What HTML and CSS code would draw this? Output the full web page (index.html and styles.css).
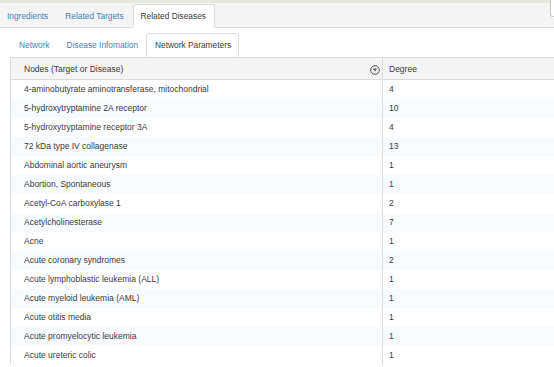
FILE: index.html
```html
<!DOCTYPE html>
<html lang="en">
<head>
  <meta charset="UTF-8">
  <title>Related Diseases - Network Parameters</title>
  <link rel="stylesheet" href="styles.css">
</head>
<body>
  <div class="top-strip"></div>
  <div class="corner-box"></div>

  <ul class="tabs main-tabs">
    <li><a href="#">Ingredients</a></li>
    <li><a href="#">Related Targets</a></li>
    <li class="active"><a href="#">Related Diseases</a></li>
  </ul>

  <div class="panel">
    <ul class="tabs sub-tabs">
      <li><a href="#">Network</a></li>
      <li><a href="#">Disease Infomation</a></li>
      <li class="active"><a href="#">Network Parameters</a></li>
    </ul>

    <table class="grid">
      <thead>
        <tr>
          <th class="col-node">
            <span>Nodes (Target or Disease)</span>
            <svg class="filter-icon" width="10" height="10" viewBox="0 0 10 10">
              <circle cx="5" cy="5" r="4.3" fill="none" stroke="#555" stroke-width="1"/>
              <path d="M2.8 3.6 H7.2 L5 6.6 Z" fill="#555"/>
            </svg>
          </th>
          <th>Degree</th>
        </tr>
      </thead>
      <tbody>
        <tr><td>4-aminobutyrate aminotransferase, mitochondrial</td><td>4</td></tr>
        <tr><td>5-hydroxytryptamine 2A receptor</td><td>10</td></tr>
        <tr><td>5-hydroxytryptamine receptor 3A</td><td>4</td></tr>
        <tr><td>72 kDa type IV collagenase</td><td>13</td></tr>
        <tr><td>Abdominal aortic aneurysm</td><td>1</td></tr>
        <tr><td>Abortion, Spontaneous</td><td>1</td></tr>
        <tr><td>Acetyl-CoA carboxylase 1</td><td>2</td></tr>
        <tr><td>Acetylcholinesterase</td><td>7</td></tr>
        <tr><td>Acne</td><td>1</td></tr>
        <tr><td>Acute coronary syndromes</td><td>2</td></tr>
        <tr><td>Acute lymphoblastic leukemia (ALL)</td><td>1</td></tr>
        <tr><td>Acute myeloid leukemia (AML)</td><td>1</td></tr>
        <tr><td>Acute otitis media</td><td>1</td></tr>
        <tr><td>Acute promyelocytic leukemia</td><td>1</td></tr>
        <tr><td>Acute ureteric colic</td><td>1</td></tr>
      </tbody>
    </table>
  </div>
</body>
</html>
```

FILE: styles.css
```css
:root {
  --text-color: #3a3a3a;
  --link-color: #4b80b6;
  --border-color: #dcdcdc;
  --bar-color: #f4f4f4;
  --stripe-color: #f7fbfe;
}

* {
  box-sizing: border-box;
  margin: 0;
  padding: 0;
}

body {
  font-family: 'Liberation Sans', Arial, sans-serif;
  font-size: 8.5px;
  color: var(--text-color);
  background-color: white;
  overflow: hidden;
  width: 554px;
  height: 367px;
  position: relative;
}

.top-strip {
  height: 3px;
  background-color: #e9e7dc;
}

/* small rounded box poking in at the top right */
.corner-box {
  position: absolute;
  top: 0;
  left: 550px;
  width: 20px;
  height: 17px;
  background-color: white;
  border: 1px solid #c8c8c8;
  border-top: none;
  border-radius: 0 0 0 3px;
}

.tabs {
  list-style: none;
  display: flex;
  font-size: 8.35px;
  border-bottom: 1px solid var(--border-color);
}

.tabs li a {
  display: block;
  color: var(--link-color);
  text-decoration: none;
  border: 1px solid transparent;
  border-radius: 3px 3px 0 0;
  margin-bottom: -1px;
}

.tabs li.active a {
  color: var(--text-color);
  background-color: white;
  border-color: var(--border-color);
  border-bottom-color: white;
}

.main-tabs {
  background-color: var(--bar-color);
  height: 25px;
  padding-top: 1px;
}

.main-tabs li a {
  height: 24px;
  line-height: 23px;
  padding: 0 8px 0 7px;
}

.main-tabs li:first-child a {
  padding-left: 6px;
}

.panel {
  padding: 5px 0 0 10px;
}

.sub-tabs {
  height: 24px;
  border-bottom: none;
}

.sub-tabs li a {
  height: 24px;
  line-height: 23px;
  padding: 0 7px 0 8px;
}

.grid {
  width: 600px;
  border-collapse: collapse;
  table-layout: fixed;
  border-left: 1px solid var(--border-color);
}

.grid th,
.grid td {
  text-align: left;
  font-weight: normal;
  padding: 0 0 0 13px;
  white-space: nowrap;
}

.grid th {
  height: 22px;
  background-color: var(--bar-color);
  border-top: 1px solid var(--border-color);
  border-bottom: 1px solid var(--border-color);
  padding-top: 1px;
}

.grid th + th,
.grid td + td {
  border-left: 1px solid var(--border-color);
  padding-left: 6px;
}

.grid .col-node {
  width: 372px;
  padding-right: 3px;
}

.col-node {
  position: relative;
}

.filter-icon {
  position: absolute;
  right: 2px;
  top: 7px;
}

.grid td {
  height: 19px;
  padding-top: 0;
}

.grid tbody tr:nth-child(even) td {
  background-color: var(--stripe-color);
}
```
